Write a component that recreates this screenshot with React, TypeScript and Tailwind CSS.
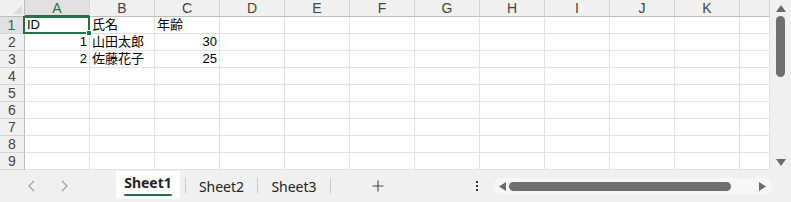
import React from "react";

const cols = ["A", "B", "C", "D", "E", "F", "G", "H", "I", "J", "K", ""];
const rows: (string | number)[][] = [
  ["ID", "氏名", "年齢"],
  [1, "山田太郎", 30],
  [2, "佐藤花子", 25],
  [],
  [],
  [],
  [],
  [],
  [],
];

const font = { fontFamily: '"Liberation Sans", "Noto Sans CJK JP", sans-serif' };

const Cell = ({ v, sel }: { v?: string | number; sel?: boolean }) => (
  <div
    className={`relative h-[17px] border-r border-b border-[#e1e1e1] px-[2px] text-[13px] leading-[16px] text-black overflow-visible whitespace-nowrap ${
      typeof v === "number" ? "text-right" : "text-left"
    } ${sel ? "z-10" : ""}`}
  >
    {v}
    {sel && (
      <div className="absolute -left-[2px] -top-[1px] right-[-1px] bottom-[-1px] border-2 border-[#217346]">
        <div className="absolute -right-[4px] -bottom-[4px] w-[6px] h-[6px] bg-[#217346] border border-white" />
      </div>
    )}
  </div>
);

export default function App() {
  return (
    <div className="w-[791px] h-[202px] bg-white flex flex-col overflow-hidden" style={font}>
      <div className="flex h-[170px]">
        <div className="flex-1 grid grid-cols-[25px_repeat(11,65px)_1fr] auto-rows-min overflow-hidden">
          <div className="h-[17px] bg-[#f0f0f0] border-r border-b border-[#bdbdbd] relative">
            <div className="absolute right-[2px] bottom-[2px] w-0 h-0 border-l-[9px] border-l-transparent border-b-[9px] border-b-[#dcdcdc]" />
          </div>
          {cols.map((c, i) => (
            <div
              key={i}
              className={`h-[17px] border-r border-b text-center text-[14px] leading-[16px] ${
                i === 0
                  ? "bg-[#e1e1e1] text-[#217346] border-r-[#d4d4d4] border-b-[#217346] border-b-2"
                  : "bg-[#f0f0f0] text-[#444] border-r-[#d4d4d4] border-b-[#bdbdbd]"
              }`}
            >
              {c}
            </div>
          ))}
          {rows.map((r, ri) => (
            <React.Fragment key={ri}>
              <div
                className={`h-[17px] border-r border-b text-center text-[14px] leading-[16px] ${
                  ri === 0
                    ? "bg-[#e1e1e1] text-[#217346] border-r-[#217346] border-r-2 border-b-[#d4d4d4]"
                    : "bg-[#f0f0f0] text-[#444] border-r-[#bdbdbd] border-b-[#d4d4d4]"
                }`}
              >
                {ri + 1}
              </div>
              {cols.map((_, ci) => (
                <Cell key={ci} v={r[ci]} sel={ri === 0 && ci === 0} />
              ))}
            </React.Fragment>
          ))}
        </div>
        <div className="w-[21px] bg-[#f0f0f0] flex flex-col items-center pt-[4px] pb-[4px]">
          <svg width="10" height="7" viewBox="0 0 10 7" className="mt-[1px]">
            <path d="M5 0 L10 7 L0 7 Z" fill="#6b6b6b" />
          </svg>
          <div className="mt-[4px] w-[9px] h-[61px] rounded-full bg-[#6f6f6f]" />
          <div className="flex-1" />
          <svg width="10" height="7" viewBox="0 0 10 7">
            <path d="M0 0 L10 0 L5 7 Z" fill="#6b6b6b" />
          </svg>
        </div>
      </div>
      <div className="h-[32px] bg-[#f0f0f0] flex items-center text-[14px] text-[#242424]" style={{ fontFamily: '"Noto Sans", "Open Sans", sans-serif' }}>
        <div className="w-[116px] flex items-center pl-[26px] gap-[20px]">
          <svg width="12" height="12" viewBox="0 0 12 12">
            <path d="M8 1 L3 6 L8 11" stroke="#a0a0a0" strokeWidth="1.2" fill="none" />
          </svg>
          <svg width="12" height="12" viewBox="0 0 12 12">
            <path d="M4 1 L9 6 L4 11" stroke="#a0a0a0" strokeWidth="1.2" fill="none" />
          </svg>
        </div>
        <div className="h-[28px] mt-[-2px] px-[8px] bg-white rounded-b-[4px] flex flex-col items-center justify-center w-[64px]">
          <span className="font-bold leading-[18px]">Sheet1</span>
          <div className="w-[48px] h-[2px] bg-[#217346] mt-[2px] rounded" />
        </div>
        <div className="w-px h-[16px] bg-[#c8c8c8] ml-[5px]" />
        <div className="w-[71px] text-center">Sheet2</div>
        <div className="w-px h-[16px] bg-[#c8c8c8]" />
        <div className="w-[72px] text-center">Sheet3</div>
        <div className="w-px h-[16px] bg-[#c8c8c8]" />
        <div className="ml-[41px]">
          <svg width="12" height="12" viewBox="0 0 12 12">
            <path d="M6 0.5 V11.5 M0.5 6 H11.5" stroke="#444" strokeWidth="1.1" />
          </svg>
        </div>
        <div className="ml-[92px] flex flex-col gap-[2px]">
          <div className="w-[2px] h-[2px] bg-[#333]" />
          <div className="w-[2px] h-[2px] bg-[#333]" />
          <div className="w-[2px] h-[2px] bg-[#333]" />
        </div>
        <div className="ml-[15px] w-[279px] h-[17px] rounded-full bg-[#f6f6f6] flex items-center px-[6px]">
          <svg width="7" height="9" viewBox="0 0 7 9">
            <path d="M7 0 L7 9 L0 4.5 Z" fill="#6b6b6b" />
          </svg>
          <div className="ml-[3px] w-[222px] h-[9px] rounded-full bg-[#6f6f6f]" />
          <div className="flex-1" />
          <svg width="7" height="9" viewBox="0 0 7 9">
            <path d="M0 0 L0 9 L7 4.5 Z" fill="#6b6b6b" />
          </svg>
        </div>
      </div>
    </div>
  );
}
